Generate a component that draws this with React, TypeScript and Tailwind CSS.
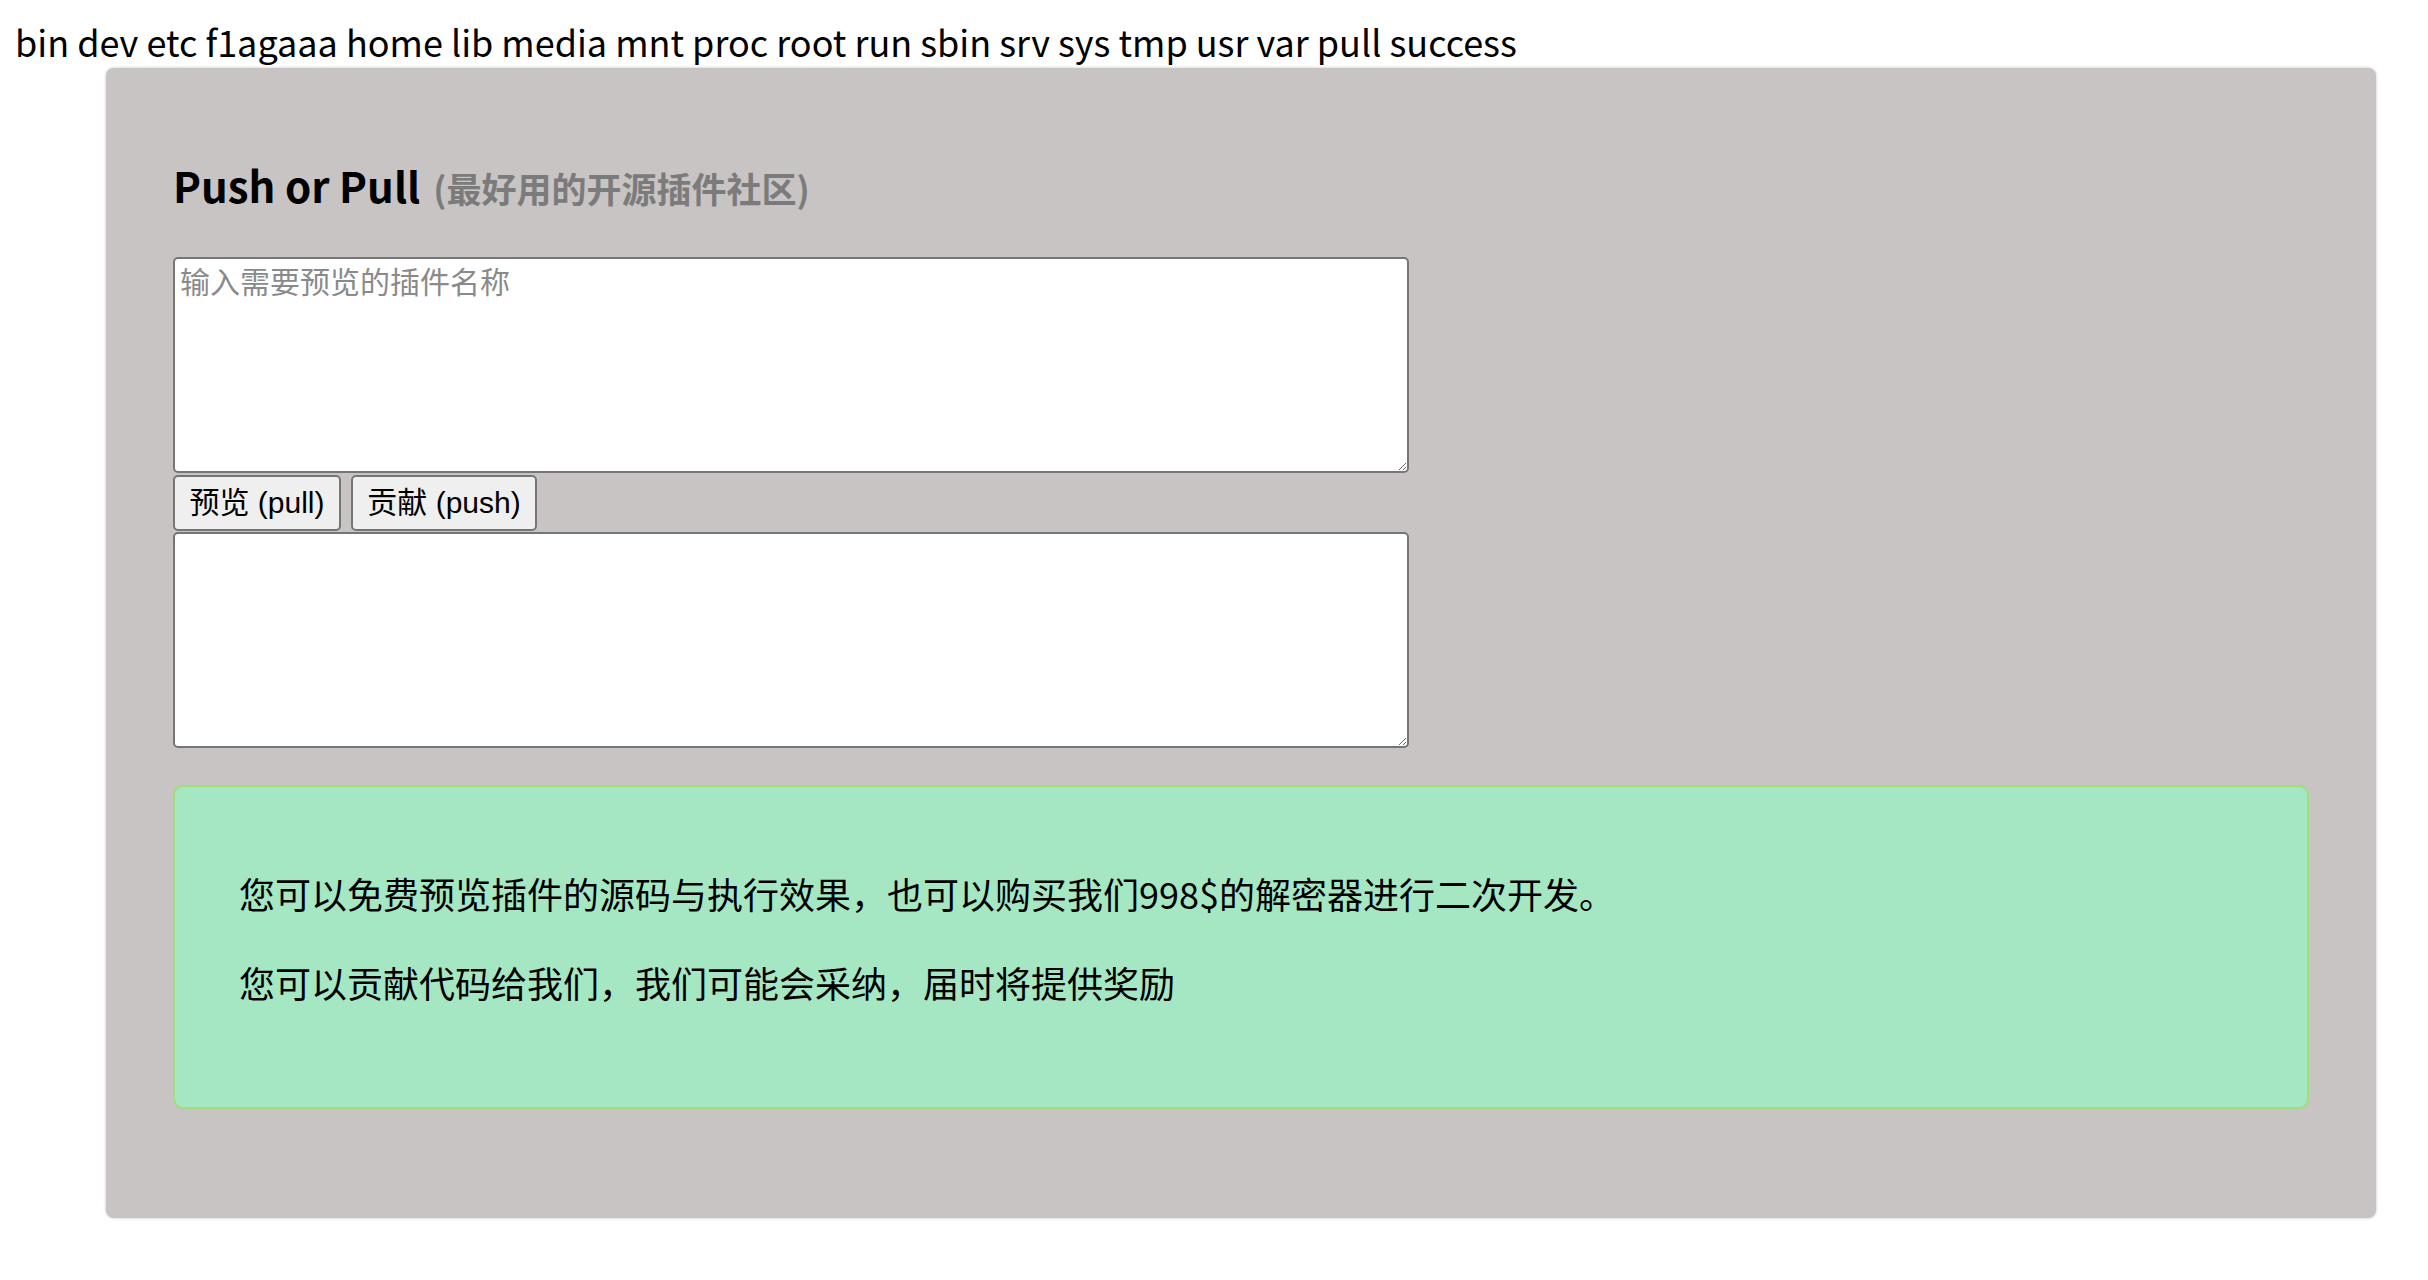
export default function App() {
  return (
    <div className="min-h-screen bg-white text-black font-['Noto_Sans_CJK_SC','Noto_Sans',sans-serif]">
      {/* Output line from the server */}
      <div className="h-[68px] pt-[15px] pl-[15px] text-[36px] leading-[52px] whitespace-nowrap">
        bin dev etc f1agaaa home lib media mnt proc root run sbin srv sys tmp usr var pull success
      </div>

      {/* Main card */}
      <div className="ml-[106px] w-[2270px] h-[1150px] rounded-[8px] bg-[#c8c4c3] shadow-[0_0_3px_rgba(0,0,0,0.25)] pt-[83px] px-[67px]">
        <h3 className="h-[66px] flex items-baseline gap-[13px] text-[42px] leading-[68px] font-bold whitespace-nowrap">
          <span>Push or Pull</span>
          <small className="text-[35px] font-bold text-[#7b7b7b]">(最好用的开源插件社区)</small>
        </h3>

        <div className="mt-[40px] flex flex-col items-start">
          <textarea
            placeholder="输入需要预览的插件名称"
            className="block w-[1236px] h-[216px] border-2 border-[#767676] rounded-[5px] bg-white px-[5px] py-[1px] text-[30px] leading-[40px] font-['Noto_Sans_CJK_SC',sans-serif] placeholder:text-[#8a8a8a] outline-none"
          />
          <div className="mt-[2px] flex gap-[10px]">
            <button className="w-[168px] h-[56px] border-2 border-[#767676] rounded-[5px] bg-[#efefef] text-[30px] leading-[40px] font-['Liberation_Sans','Noto_Sans_CJK_SC',sans-serif] text-black">
              预览 (pull)
            </button>
            <button className="w-[186px] h-[56px] border-2 border-[#767676] rounded-[5px] bg-[#efefef] text-[30px] leading-[40px] font-['Liberation_Sans','Noto_Sans_CJK_SC',sans-serif] text-black">
              贡献 (push)
            </button>
          </div>
          <textarea className="mt-[1px] block w-[1236px] h-[216px] border-2 border-[#767676] rounded-[5px] bg-white px-[5px] py-[1px] text-[30px] outline-none" />
        </div>

        {/* Info box */}
        <div className="mt-[37px] h-[324px] rounded-[10px] border-2 border-[#a0de78] bg-[#a5e6c3] pl-[64px] pt-[80px] text-[36px] leading-[52px]">
          <p>您可以免费预览插件的源码与执行效果，也可以购买我们998$的解密器进行二次开发。</p>
          <p className="mt-[37px]">您可以贡献代码给我们，我们可能会采纳，届时将提供奖励</p>
        </div>
      </div>
    </div>
  );
}
